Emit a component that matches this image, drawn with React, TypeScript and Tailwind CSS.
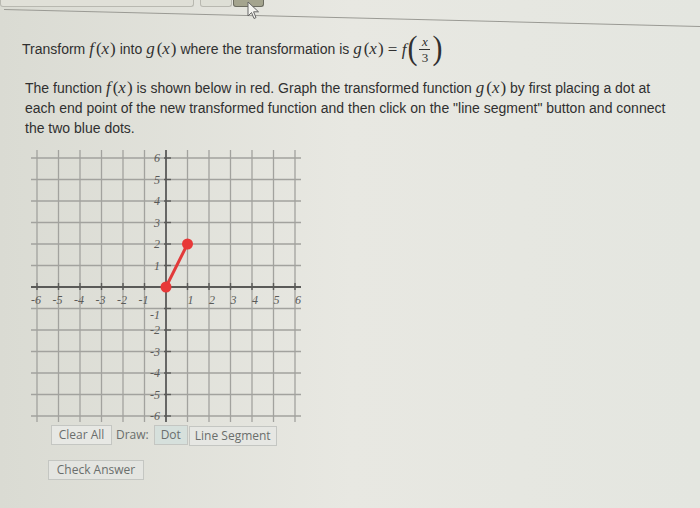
import React from "react";

const M = ({ children, className = "" }: { children: React.ReactNode; className?: string }) => (
  <span className={"font-['Liberation_Serif',serif] italic text-[17px] leading-none " + className}>{children}</span>
);
const P = ({ children }: { children: React.ReactNode }) => (
  <span className="font-['Liberation_Serif',serif] text-[17px] leading-none">{children}</span>
);
const Fn = ({ f }: { f: string }) => (
  <span className="whitespace-nowrap">
    <M className="pr-[2px]">{f}</M>
    <P>(</P>
    <M className="pr-[1px]">x</M>
    <P>)</P>
  </span>
);

function Graph() {
  const ox = 166;
  const oy = 290;
  const u = 21.5;
  const ids = [-6, -5, -4, -3, -2, -1, 0, 1, 2, 3, 4, 5, 6];
  const top = 153;
  const bottom = 425;
  const left = 31;
  const right = 301;
  return (
    <svg width={285} height={280} viewBox="25 148 285 280" className="block">
      {ids.map((i) =>
        i === 0 ? null : (
          <line key={"v" + i} x1={ox + u * i} y1={top} x2={ox + u * i} y2={bottom} stroke="#a2a29e" strokeWidth={1.3} />
        )
      )}
      {ids.map((j) =>
        j === 0 ? null : (
          <line key={"h" + j} x1={left} y1={oy - u * j} x2={right} y2={oy - u * j} stroke="#a2a29e" strokeWidth={1.3} />
        )
      )}
      <line x1={ox} y1={top} x2={ox} y2={bottom} stroke="#5a5a58" strokeWidth={1.8} />
      <line x1={left} y1={oy} x2={right} y2={oy} stroke="#5a5a58" strokeWidth={1.8} />
      {ids.map((j) =>
        j === 0 ? null : (
          <line key={"ty" + j} x1={ox - 2} y1={oy - u * j} x2={ox + 5} y2={oy - u * j} stroke="#5a5a58" strokeWidth={1.4} />
        )
      )}
      {ids.map((i) =>
        i === 0 ? null : (
          <line key={"tx" + i} x1={ox + u * i} y1={oy - 4} x2={ox + u * i} y2={oy + 3} stroke="#5a5a58" strokeWidth={1.4} />
        )
      )}
      {ids.map((j) =>
        j === 0 ? null : (
          <text
            key={"ly" + j}
            x={ox - 6}
            y={oy - u * j + (j === -1 ? 10 : 4)}
            textAnchor="end"
            fontFamily="Liberation Serif, serif"
            fontStyle="italic"
            fontSize={12}
            fill="#5a5a58"
          >
            {j}
          </text>
        )
      )}
      {ids.map((i) =>
        i === 0 ? null : (
          <text
            key={"lx" + i}
            x={ox + u * i + (i < 0 ? -1 : 3)}
            y={oy + 17}
            textAnchor="middle"
            fontFamily="Liberation Serif, serif"
            fontStyle="italic"
            fontSize={12}
            fill="#5a5a58"
          >
            {i}
          </text>
        )
      )}
      <line x1={ox} y1={oy} x2={ox + u} y2={oy - 2 * u} stroke="#e23a3a" strokeWidth={3} />
      <circle cx={ox} cy={oy} r={5.5} fill="#e83838" />
      <circle cx={ox + u} cy={oy - 2 * u} r={5.5} fill="#e83838" />
    </svg>
  );
}

const Btn = ({ children, className = "" }: { children: React.ReactNode; className?: string }) => (
  <div
    className={
      "h-[20px] flex items-center justify-center border border-[#c4c6c2] text-[12px] text-[#6a6e6c] font-['Open_Sans',sans-serif] " +
      className
    }
  >
    {children}
  </div>
);

export default function App() {
  return (
    <div className="relative w-[700px] h-[508px] overflow-hidden bg-gradient-to-r from-[#dadbd3] via-[#e8e8e2] to-[#e4e6e0] text-[#2c2c2c] font-['Liberation_Sans',sans-serif]">
      {/* top strip */}
      <div className="absolute left-0 top-0 flex">
        <div className="w-[194px] h-[7px] border border-t-0 border-[#b8b8b0] rounded-b-[3px] bg-[#e0e0d8]" />
        <div className="ml-[6px] w-[32px] h-[7px] border border-t-0 border-[#b8b8b0] rounded-b-[3px] bg-[#dedfd6]" />
        <div className="ml-[1px] w-[31px] h-[7px] border border-t-0 border-[#6c6c60] rounded-b-[3px] bg-[#a4a48e]" />
      </div>
      <div className="absolute left-[4px] top-[9px] w-[700px] h-0 border-t border-[#9a9a94] origin-left rotate-[1.4deg]" />
      <svg className="absolute left-[247px] top-[1px]" width={14} height={20} viewBox="0 0 14 20">
        <path d="M1 1 L1 15 L4.5 11.5 L7 17.5 L9 16.6 L6.6 10.8 L11.5 10.8 Z" fill="#f4f4f0" stroke="#666" strokeWidth={1} />
      </svg>

      <div className="pl-[22px] pt-[34px]">
        <div className="flex items-center h-[30px] text-[14px] text-[#303030]">
          <span>Transform&nbsp;</span>
          <Fn f="f" />
          <span>&nbsp;into&nbsp;</span>
          <Fn f="g" />
          <span>&nbsp;where the transformation is&nbsp;</span>
          <Fn f="g" />
          <P>&nbsp;=&nbsp;</P>
          <M className="pr-[1px]">f</M>
          <span className="font-['Liberation_Serif',serif] text-[30px] leading-none -mt-[3px] scale-y-110">(</span>
          <span className="flex flex-col items-center font-['Liberation_Serif',serif] text-[13px] leading-[13px] mx-[2px]">
            <span className="italic">x</span>
            <span className="w-[11px] border-t border-[#303030] my-[1px]" />
            <span>3</span>
          </span>
          <span className="font-['Liberation_Serif',serif] text-[30px] leading-none -mt-[3px] scale-y-110">)</span>
        </div>

        <div className="mt-[14px] pl-[3px] w-[656px] text-[14px] leading-[20px] text-[#303030]">
          The function <Fn f="f" /> is shown below in red. Graph the transformed function <Fn f="g" /> by first placing a dot at{" "}
          <br />
          each end point of the new transformed function and then click on the "line segment" button and connect the two
          blue dots.
        </div>

        <div className="mt-[7px] ml-[3px]">
          <Graph />
        </div>

        <div className="flex items-center -mt-[1px] ml-[29px]">
          <Btn className="w-[61px] bg-[#e7e8e4]">Clear All</Btn>
          <span className="ml-[4px] text-[12px] text-[#6a6e6c] font-['Open_Sans',sans-serif]">Draw:</span>
          <Btn className="ml-[5px] w-[34px] bg-[#d6e0dc]">Dot</Btn>
          <Btn className="ml-[1px] w-[88px] bg-[#e6e7e3] mt-[2px]">Line Segment</Btn>
        </div>

        <Btn className="mt-[14px] ml-[26px] w-[96px] bg-[#e4e5e1]">Check Answer</Btn>
      </div>
    </div>
  );
}
